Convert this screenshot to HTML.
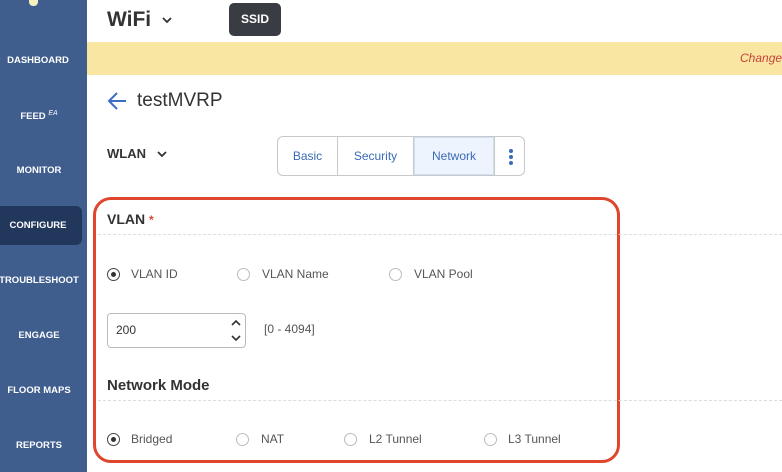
<!DOCTYPE html><html><head><style>
*{margin:0;padding:0;box-sizing:border-box}
body{width:782px;height:472px;overflow:hidden;background:#fff;font-family:"Liberation Sans",sans-serif;position:relative}
.a{position:absolute}
.side{left:0;top:0;width:87px;height:472px;background:#3f5e8e}
.nav{position:absolute;left:0;width:78px;text-align:center;color:#fff;font-size:9.5px;font-weight:bold;letter-spacing:0}
.radio{position:absolute;width:13px;height:13px;border:1px solid #bbb;border-radius:50%}
.radio.on{border-color:#444}
.radio.on::after{content:"";position:absolute;left:3px;top:3px;width:5px;height:5px;border-radius:50%;background:#333}
.lbl{position:absolute;font-size:12px;color:#555}
.dash{position:absolute;left:98px;right:0;border-top:1px dashed #ddd}
</style></head><body>
<div class="a side"></div>
<div class="a" style="left:29px;top:0;width:9px;height:6px;background:#f4f0c0;border-radius:0 0 4px 4px"></div>
<div class="a" style="left:0;top:206px;width:82px;height:39px;background:#22375c;border-radius:0 6px 6px 0"></div>
<div class="nav" style="top:55px;left:-1px">DASHBOARD</div>
<div class="nav" style="top:110px">FEED <i style="font-weight:normal;font-size:7px;vertical-align:4px">EA</i></div>
<div class="nav" style="top:165px">MONITOR</div>
<div class="nav" style="top:220px;left:-1px">CONFIGURE</div>
<div class="nav" style="top:275px;left:-3px;width:84px;white-space:nowrap">TROUBLESHOOT</div>
<div class="nav" style="top:330px">ENGAGE</div>
<div class="nav" style="top:385px">FLOOR MAPS</div>
<div class="nav" style="top:440px">REPORTS</div>

<div class="a" style="left:107px;top:8px;font-size:21px;font-weight:bold;color:#333">WiFi</div>
<svg class="a" style="left:161px;top:16px" width="12" height="8"><path d="M2 2l4 4 4-4" stroke="#333" stroke-width="1.8" fill="none"/></svg>
<div class="a" style="left:229px;top:3px;width:52px;height:33px;background:#3a3c44;border-radius:5px;color:#fff;font-size:12px;font-weight:bold;text-align:center;line-height:33px">SSID</div>
<div class="a" style="left:87px;top:42px;width:695px;height:33px;background:#f8e6a2"></div>
<div class="a" style="left:740px;top:51px;font-size:12px;font-style:italic;color:#c8443a;white-space:nowrap">Change</div>

<svg class="a" style="left:106px;top:91px" width="22" height="20"><path d="M20 10H3M11 2L3 10l8 8" stroke="#3b6fc6" stroke-width="2" fill="none"/></svg>
<div class="a" style="left:137px;top:90px;font-size:19px;color:#333">testMVRP</div>

<div class="a" style="left:107px;top:146px;font-size:13px;font-weight:bold;color:#333">WLAN</div>
<svg class="a" style="left:156px;top:150px" width="12" height="8"><path d="M2 2l4 4 4-4" stroke="#333" stroke-width="1.8" fill="none"/></svg>

<div class="a" style="left:277px;top:136px;width:248px;height:40px;border:1px solid #c8c8c8;border-radius:6px;overflow:hidden;font-size:12px;color:#3b6ab8">
<div class="a" style="left:0;top:0;width:60px;height:38px;line-height:38px;text-align:center;border-right:1px solid #c8c8c8">Basic</div>
<div class="a" style="left:60px;top:0;width:76px;height:38px;line-height:38px;text-align:center;border-right:1px solid #c8c8c8">Security</div>
<div class="a" style="left:136px;top:0;width:81px;height:38px;line-height:38px;text-align:center;background:#edf4fd;border-right:1px solid #c8c8c8;box-shadow:inset 0 0 0 1px #cfe0f5">Network</div>
<div class="a" style="left:231px;top:12px;width:4px;height:4px;border-radius:50%;background:#3b6ab8;box-shadow:0 6px 0 #3b6ab8,0 12px 0 #3b6ab8"></div>
</div>

<div class="a" style="left:93px;top:197px;width:527px;height:266px;border:3px solid #e0452d;border-radius:18px"></div>
<div class="a" style="left:107px;top:211px;font-size:14px;font-weight:bold;color:#333">VLAN <span style="color:#e0452d;font-size:12px">*</span></div>
<div class="dash" style="top:234px"></div>
<div class="radio on" style="left:107px;top:268px"></div><div class="lbl" style="left:131px;top:267px">VLAN ID</div>
<div class="radio" style="left:237px;top:268px"></div><div class="lbl" style="left:262px;top:267px">VLAN Name</div>
<div class="radio" style="left:389px;top:268px"></div><div class="lbl" style="left:414px;top:267px">VLAN Pool</div>

<div class="a" style="left:107px;top:313px;width:139px;height:35px;border:1px solid #bbb;border-radius:4px"></div>
<div class="lbl" style="left:116px;top:323px;color:#333">200</div>
<svg class="a" style="left:229px;top:318px" width="14" height="26"><path d="M3 7l4-4 4 4M3 18l4 4 4-4" stroke="#333" stroke-width="1.6" fill="none"/></svg>
<div class="lbl" style="left:264px;top:322px;font-size:12px">[0 - 4094]</div>

<div class="a" style="left:107px;top:377px;font-size:15px;font-weight:bold;color:#333">Network Mode</div>
<div class="dash" style="top:400px"></div>
<div class="radio on" style="left:107px;top:433px"></div><div class="lbl" style="left:131px;top:432px">Bridged</div>
<div class="radio" style="left:236px;top:433px"></div><div class="lbl" style="left:261px;top:432px">NAT</div>
<div class="radio" style="left:344px;top:433px"></div><div class="lbl" style="left:369px;top:432px">L2 Tunnel</div>
<div class="radio" style="left:484px;top:433px"></div><div class="lbl" style="left:508px;top:432px">L3 Tunnel</div>
</body></html>
